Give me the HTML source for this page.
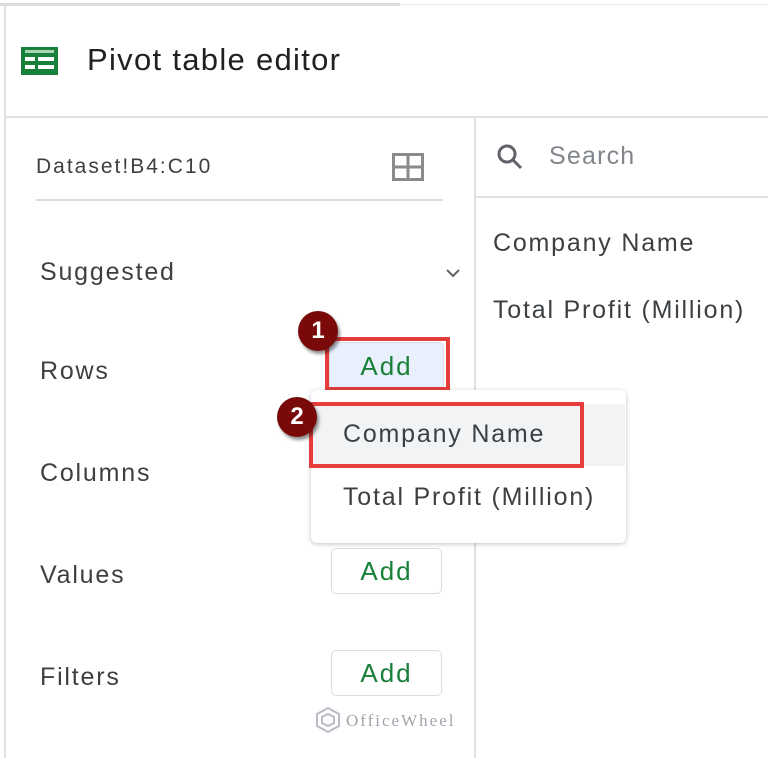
<!DOCTYPE html>
<html><head><meta charset="utf-8"><style>
*{margin:0;padding:0;box-sizing:border-box}
body{width:768px;height:758px;background:#fff;position:relative;overflow:hidden;font-family:"Liberation Sans",Arial,sans-serif;color:#202124}
.a{position:absolute;white-space:nowrap}
.lbl{font-size:25px;line-height:24px;color:#3c4043;letter-spacing:1.8px}
.btn{position:absolute;border:1px solid #dadce0;border-radius:5px;color:#188038;font-size:26px;text-align:center;background:#fff;letter-spacing:2px}
.badge{position:absolute;width:40px;height:40px;border-radius:50%;background:#7a0a0a;color:#fff;font-weight:bold;font-size:24px;line-height:40px;text-align:center;box-shadow:2px 3px 3px rgba(0,0,0,.45)}
</style></head><body>
<div class="a" style="left:0;top:3px;width:400px;height:3px;background:#dcdcdc"></div>
<div class="a" style="left:400px;top:4px;width:368px;height:1px;background:#e8e8e8"></div>
<div class="a" style="left:4px;top:5px;width:2px;height:753px;background:#e0e0e0"></div>
<div class="a" style="left:6px;top:116px;width:762px;height:2px;background:#e0e0e0"></div>
<div class="a" style="left:474px;top:118px;width:2px;height:640px;background:#e0e0e0"></div>
<div class="a" style="left:476px;top:196px;width:292px;height:2px;background:#e0e0e0"></div>
<svg class="a" style="left:21px;top:47px" width="37" height="28" viewBox="0 0 37 28"><rect width="37" height="28" fill="#188038"/><rect x="4" y="3" width="29" height="3" fill="#a8d5b5"/><rect x="4" y="10" width="10" height="4" fill="#fff"/><rect x="17" y="10" width="16" height="4" fill="#fff"/><rect x="4" y="18" width="10" height="4" fill="#fff"/><rect x="17" y="18" width="16" height="4" fill="#fff"/></svg>
<div class="a" style="left:87px;top:44px;font-size:31px;line-height:32px;color:#202124;letter-spacing:1.3px">Pivot table editor</div>
<div class="a" style="left:36px;top:156px;font-size:21px;line-height:21px;color:#3c4043;letter-spacing:2px">Dataset!B4:C10</div>
<svg class="a" style="left:392px;top:153px" width="32" height="28" viewBox="0 0 32 28"><rect x="1.5" y="1.5" width="29" height="25" fill="none" stroke="#8a8a8a" stroke-width="3"/><line x1="16" y1="1" x2="16" y2="27" stroke="#8a8a8a" stroke-width="3"/><line x1="1" y1="14" x2="31" y2="14" stroke="#8a8a8a" stroke-width="3"/></svg>
<div class="a" style="left:36px;top:199px;width:407px;height:2px;background:#dadce0"></div>
<div class="a lbl" style="left:40px;top:260px">Suggested</div>
<svg class="a" style="left:445px;top:268px" width="16" height="10" viewBox="0 0 16 10"><path d="M2 2l6 6 6-6" fill="none" stroke="#5f6368" stroke-width="2"/></svg>
<div class="a lbl" style="left:40px;top:359px">Rows</div>
<div class="a lbl" style="left:40px;top:461px">Columns</div>
<div class="a lbl" style="left:40px;top:563px">Values</div>
<div class="a lbl" style="left:40px;top:665px">Filters</div>
<div class="btn" style="left:329px;top:342px;width:115px;height:48px;background:#e8f0fe;line-height:46px">Add</div>
<div class="a" style="left:325px;top:337px;width:125px;height:54px;border:4px solid #e53c3c"></div>
<div class="btn" style="left:331px;top:548px;width:111px;height:46px;line-height:44px">Add</div>
<div class="btn" style="left:331px;top:650px;width:111px;height:46px;line-height:44px">Add</div>
<div class="a" style="left:311px;top:390px;width:315px;height:153px;background:#fff;border-radius:6px;box-shadow:0 1px 5px rgba(0,0,0,.25)"></div>
<div class="a" style="left:311px;top:404px;width:314px;height:62px;background:#f1f3f4"></div>
<div class="a lbl" style="left:343px;top:422px">Company Name</div>
<div class="a lbl" style="left:343px;top:485px">Total Profit (Million)</div>
<div class="a" style="left:309px;top:402px;width:275px;height:66px;border:4px solid #e53c3c"></div>
<div class="badge" style="left:298px;top:311px">1</div>
<div class="badge" style="left:277px;top:397px">2</div>
<svg class="a" style="left:496px;top:143px" width="28" height="28" viewBox="0 0 28 28"><circle cx="11" cy="11" r="8" fill="none" stroke="#5f6368" stroke-width="3"/><line x1="17" y1="17" x2="25" y2="25" stroke="#5f6368" stroke-width="3"/></svg>
<div class="a" style="left:549px;top:144px;font-size:25px;line-height:24px;color:#80868b;letter-spacing:1.2px">Search</div>
<div class="a lbl" style="left:493px;top:231px">Company Name</div>
<div class="a lbl" style="left:493px;top:298px">Total Profit (Million)</div>
<svg class="a" style="left:314px;top:706px" width="28" height="28" viewBox="0 0 28 28"><path d="M14 2l11 6v12l-11 6-11-6V8z" fill="none" stroke="#b8bcc4" stroke-width="2"/><path d="M14 8l6 3v6l-6 3-6-3v-6z" fill="none" stroke="#b8bcc4" stroke-width="2"/></svg>
<div class="a" style="left:346px;top:711px;font-family:'Liberation Serif',serif;font-size:17px;letter-spacing:2px;color:#a0a4ac">OfficeWheel</div>
</body></html>
